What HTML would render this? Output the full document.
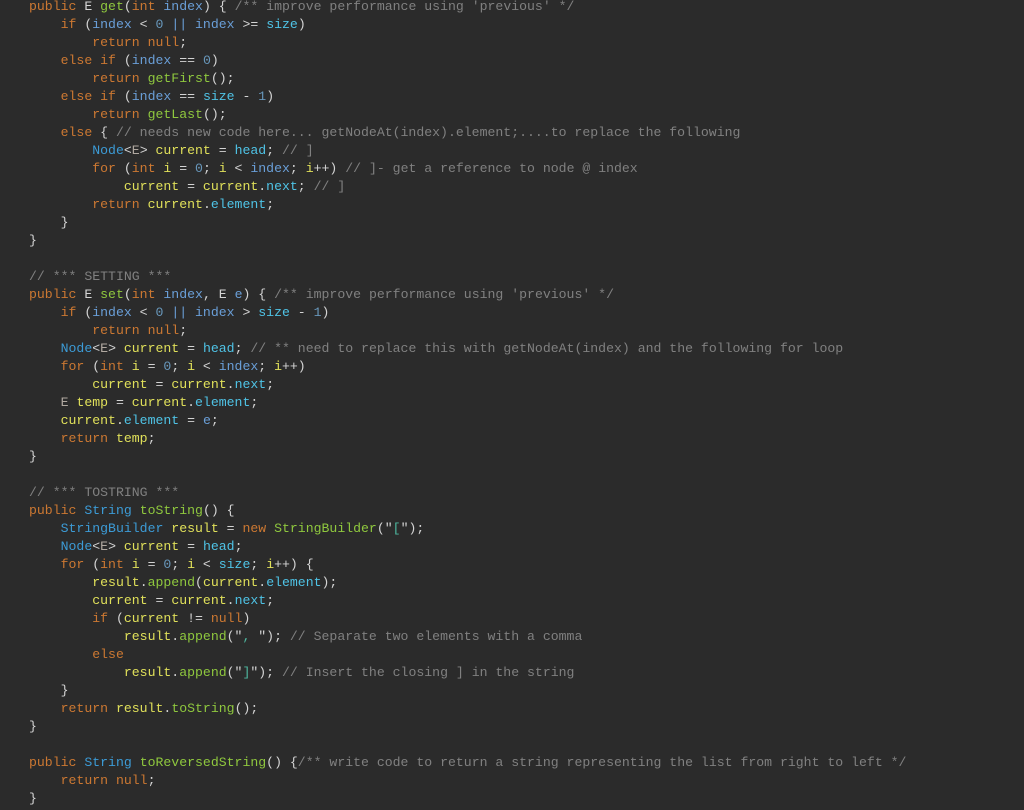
<!DOCTYPE html><html><head><style>
body{margin:0;background:#2b2b2b;width:1024px;height:810px;overflow:hidden}
pre{margin:0;position:absolute;left:29px;top:-2px;font-family:"Liberation Mono",monospace;font-size:13.18px;line-height:18px;color:#d4d4d4}
.k{color:#cc7832}.p{color:#6a9fd8}.n{color:#6897bb}.f{color:#4fc3e6}.l{color:#e0e05a}.m{color:#8fc83e}.t{color:#3c9bd6}.c{color:#808080}.s{color:#4eb8a0}.g{color:#b0a8a0}
</style></head><body><pre><span class="k">public</span> E <span class="m">get</span>(<span class="k">int</span> <span class="p">index</span>) { <span class="c">/** improve performance using 'previous' */</span>
    <span class="k">if</span> (<span class="p">index</span> &lt; <span class="n">0</span> <span class="p">||</span> <span class="p">index</span> &gt;= <span class="f">size</span>)
        <span class="k">return</span> <span class="k">null</span>;
    <span class="k">else if</span> (<span class="p">index</span> == <span class="n">0</span>)
        <span class="k">return</span> <span class="m">getFirst</span>();
    <span class="k">else if</span> (<span class="p">index</span> == <span class="f">size</span> - <span class="n">1</span>)
        <span class="k">return</span> <span class="m">getLast</span>();
    <span class="k">else</span> { <span class="c">// needs new code here... getNodeAt(index).element;....to replace the following</span>
        <span class="t">Node</span>&lt;<span class="g">E</span>&gt; <span class="l">current</span> = <span class="f">head</span>; <span class="c">// ]</span>
        <span class="k">for</span> (<span class="k">int</span> <span class="l">i</span> = <span class="n">0</span>; <span class="l">i</span> &lt; <span class="p">index</span>; <span class="l">i</span>++) <span class="c">// ]- get a reference to node @ index</span>
            <span class="l">current</span> = <span class="l">current</span>.<span class="f">next</span>; <span class="c">// ]</span>
        <span class="k">return</span> <span class="l">current</span>.<span class="f">element</span>;
    }
}

<span class="c">// *** SETTING ***</span>
<span class="k">public</span> E <span class="m">set</span>(<span class="k">int</span> <span class="p">index</span>, E <span class="p">e</span>) { <span class="c">/** improve performance using 'previous' */</span>
    <span class="k">if</span> (<span class="p">index</span> &lt; <span class="n">0</span> <span class="p">||</span> <span class="p">index</span> &gt; <span class="f">size</span> - <span class="n">1</span>)
        <span class="k">return</span> <span class="k">null</span>;
    <span class="t">Node</span>&lt;<span class="g">E</span>&gt; <span class="l">current</span> = <span class="f">head</span>; <span class="c">// ** need to replace this with getNodeAt(index) and the following for loop</span>
    <span class="k">for</span> (<span class="k">int</span> <span class="l">i</span> = <span class="n">0</span>; <span class="l">i</span> &lt; <span class="p">index</span>; <span class="l">i</span>++)
        <span class="l">current</span> = <span class="l">current</span>.<span class="f">next</span>;
    <span class="g">E</span> <span class="l">temp</span> = <span class="l">current</span>.<span class="f">element</span>;
    <span class="l">current</span>.<span class="f">element</span> = <span class="p">e</span>;
    <span class="k">return</span> <span class="l">temp</span>;
}

<span class="c">// *** TOSTRING ***</span>
<span class="k">public</span> <span class="t">String</span> <span class="m">toString</span>() {
    <span class="t">StringBuilder</span> <span class="l">result</span> = <span class="k">new</span> <span class="m">StringBuilder</span>("<span class="s">[</span>");
    <span class="t">Node</span>&lt;<span class="g">E</span>&gt; <span class="l">current</span> = <span class="f">head</span>;
    <span class="k">for</span> (<span class="k">int</span> <span class="l">i</span> = <span class="n">0</span>; <span class="l">i</span> &lt; <span class="f">size</span>; <span class="l">i</span>++) {
        <span class="l">result</span>.<span class="m">append</span>(<span class="l">current</span>.<span class="f">element</span>);
        <span class="l">current</span> = <span class="l">current</span>.<span class="f">next</span>;
        <span class="k">if</span> (<span class="l">current</span> != <span class="k">null</span>)
            <span class="l">result</span>.<span class="m">append</span>("<span class="s">, </span>"); <span class="c">// Separate two elements with a comma</span>
        <span class="k">else</span>
            <span class="l">result</span>.<span class="m">append</span>("<span class="s">]</span>"); <span class="c">// Insert the closing ] in the string</span>
    }
    <span class="k">return</span> <span class="l">result</span>.<span class="m">toString</span>();
}

<span class="k">public</span> <span class="t">String</span> <span class="m">toReversedString</span>() {<span class="c">/** write code to return a string representing the list from right to left */</span>
    <span class="k">return</span> <span class="k">null</span>;
}
</pre></body></html>
